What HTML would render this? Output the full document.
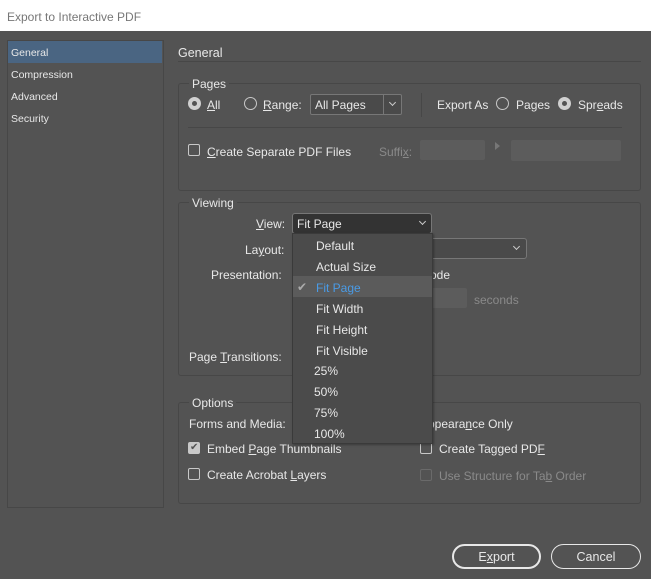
<!DOCTYPE html>
<html><head><meta charset="utf-8"><style>
*{box-sizing:border-box;margin:0;padding:0}
body{width:651px;height:579px;background:#535353;font-family:"Liberation Sans",sans-serif;font-size:12px;color:#e8e8e8;position:relative;overflow:hidden}
.a{position:absolute;white-space:nowrap}
.t{line-height:16px}
.grp{position:absolute;border:1px solid #474747;border-radius:3px}
.lbl{position:absolute;background:#535353;padding:0 3px;line-height:16px}
.rad{position:absolute;width:13px;height:13px;border:1px solid #c8c8c8;border-radius:50%}
.rad.on{background:#d0d0d0;border-color:#d0d0d0}
.rad.on::after{content:"";position:absolute;left:3px;top:3px;width:5px;height:5px;border-radius:50%;background:#535353}
.chk{position:absolute;width:12px;height:12px;border:1px solid #c8c8c8;border-radius:2px}
.dis{color:#8a8a8a}
.inp{position:absolute;background:#5c5c5c;border-radius:2px}
u{text-decoration:underline}
.btn{position:absolute;border:2px solid #e8e8e8;border-radius:13px;text-align:center;line-height:21px;font-size:12.5px}
.mi{position:absolute;left:23px;line-height:16px}
.chev{position:absolute;width:5px;height:5px;border-right:1px solid #ccc;border-bottom:1px solid #ccc;transform:rotate(45deg)}
</style></head><body>
<div class="a" style="left:0;top:0;width:651px;height:31px;background:#fff"></div>
<div class="a t" style="left:7px;top:9px;color:#777;font-size:12px">Export to Interactive PDF</div>

<div class="a" style="left:7px;top:40px;width:157px;height:468px;border:1px solid #474747;background:#535353"></div>
<div class="a" style="left:8px;top:41px;width:154px;height:22px;background:#4a6582"></div>
<div class="a t" style="left:11px;top:45px;font-size:10.5px">General</div>
<div class="a t" style="left:11px;top:67px;font-size:10.5px">Compression</div>
<div class="a t" style="left:11px;top:89px;font-size:10.5px">Advanced</div>
<div class="a t" style="left:11px;top:111px;font-size:10.5px">Security</div>

<div class="a t" style="left:178px;top:45px;font-size:12.5px">General</div>
<div class="a" style="left:178px;top:61px;width:463px;height:1px;background:#474747"></div>

<!-- Pages -->
<div class="grp" style="left:178px;top:83px;width:463px;height:108px"></div>
<div class="lbl" style="left:189px;top:76px">Pages</div>
<div class="rad on" style="left:188px;top:97px"></div>
<div class="a t" style="left:207px;top:97px"><u>A</u>ll</div>
<div class="rad" style="left:244px;top:97px"></div>
<div class="a t" style="left:263px;top:97px"><u>R</u>ange:</div>
<div class="a" style="left:310px;top:94px;width:92px;height:21px;border:1px solid #777;border-radius:2px;background:#4a4a4a"></div>
<div class="a" style="left:383px;top:95px;width:1px;height:19px;background:#777"></div>
<div class="a t" style="left:315px;top:97px">All Pages</div>
<div class="chev" style="left:390px;top:100px"></div>
<div class="a" style="left:421px;top:93px;width:1px;height:24px;background:#474747"></div>
<div class="a t" style="left:437px;top:97px">Export As</div>
<div class="rad" style="left:496px;top:97px"></div>
<div class="a t" style="left:516px;top:97px">Pa<u>g</u>es</div>
<div class="rad on" style="left:558px;top:97px"></div>
<div class="a t" style="left:578px;top:97px">Spr<u>e</u>ads</div>
<div class="a" style="left:188px;top:127px;width:434px;height:1px;background:#474747"></div>
<div class="chk" style="left:188px;top:144px"></div>
<div class="a t" style="left:207px;top:144px"><u>C</u>reate Separate PDF Files</div>
<div class="a t dis" style="left:379px;top:144px">Suffi<u>x</u>:</div>
<div class="inp" style="left:420px;top:140px;width:65px;height:20px"></div>
<div class="a" style="left:495px;top:142px;width:0;height:0;border-left:5px solid #777;border-top:4px solid transparent;border-bottom:4px solid transparent"></div>
<div class="inp" style="left:511px;top:140px;width:110px;height:21px"></div>

<!-- Viewing -->
<div class="grp" style="left:178px;top:202px;width:463px;height:174px"></div>
<div class="lbl" style="left:189px;top:195px">Viewing</div>
<div class="a t" style="left:256px;top:216px"><u>V</u>iew:</div>
<div class="a" style="left:292px;top:213px;width:140px;height:21px;border:1px solid #777;border-radius:3px;background:#333"></div>
<div class="a t" style="left:297px;top:216px">Fit Page</div>
<div class="chev" style="left:420px;top:219px"></div>
<div class="a t" style="left:245px;top:242px">La<u>y</u>out:</div>
<div class="a" style="left:400px;top:238px;width:127px;height:21px;border:1px solid #777;border-radius:3px;background:#4a4a4a"></div>
<div class="chev" style="left:514px;top:244px"></div>
<div class="a t" style="left:211px;top:267px">Presentation:</div>
<div class="a t" style="left:420px;top:267px">Mode</div>
<div class="inp" style="left:420px;top:288px;width:47px;height:20px"></div>
<div class="a t dis" style="left:474px;top:292px">seconds</div>
<div class="a t" style="left:189px;top:349px">Page <u>T</u>ransitions:</div>

<!-- Options -->
<div class="grp" style="left:178px;top:402px;width:463px;height:102px"></div>
<div class="lbl" style="left:189px;top:395px">Options</div>
<div class="a t" style="left:189px;top:416px">Forms and Media:</div>
<div class="a t" style="left:420px;top:416px">Appeara<u>n</u>ce Only</div>
<div class="chk" style="left:188px;top:442px;background:#c8c8c8"></div>
<div class="a" style="left:190px;top:441px;color:#535353;font-size:10px;line-height:14px">&#10004;</div>
<div class="a t" style="left:207px;top:441px">Embed <u>P</u>age Thumbnails</div>
<div class="chk" style="left:420px;top:442px"></div>
<div class="a t" style="left:439px;top:441px">Create Tagged PD<u>F</u></div>
<div class="chk" style="left:188px;top:468px"></div>
<div class="a t" style="left:207px;top:467px">Create Acrobat <u>L</u>ayers</div>
<div class="chk" style="left:420px;top:469px;border-color:#6a6a6a"></div>
<div class="a t dis" style="left:439px;top:468px">Use Structure for Ta<u>b</u> Order</div>

<!-- dropdown menu -->
<div class="a" style="left:292px;top:233px;width:141px;height:211px;background:#4b4b4b;border:1px solid #3a3a3a;box-shadow:1px 1px 2px rgba(0,0,0,.3)">
<div class="a" style="left:0;top:42px;width:139px;height:21px;background:#5b5b5b"></div>
<div class="mi" style="top:4px">Default</div>
<div class="mi" style="top:25px">Actual Size</div>
<div class="a t" style="left:4px;top:45px;color:#aaa">&#10004;</div>
<div class="mi" style="top:46px;color:#4a9be6">Fit Page</div>
<div class="mi" style="top:67px">Fit Width</div>
<div class="mi" style="top:88px">Fit Height</div>
<div class="mi" style="top:109px">Fit Visible</div>
<div class="mi" style="top:129px;left:21px">25%</div>
<div class="mi" style="top:150px;left:21px">50%</div>
<div class="mi" style="top:171px;left:21px">75%</div>
<div class="mi" style="top:192px;left:21px">100%</div>
</div>

<div class="btn" style="left:452px;top:544px;width:89px;height:25px;line-height:22px">E<u>x</u>port</div>
<div class="btn" style="left:551px;top:544px;width:90px;height:25px;border-width:1px;line-height:24px">Cancel</div>
</body></html>
